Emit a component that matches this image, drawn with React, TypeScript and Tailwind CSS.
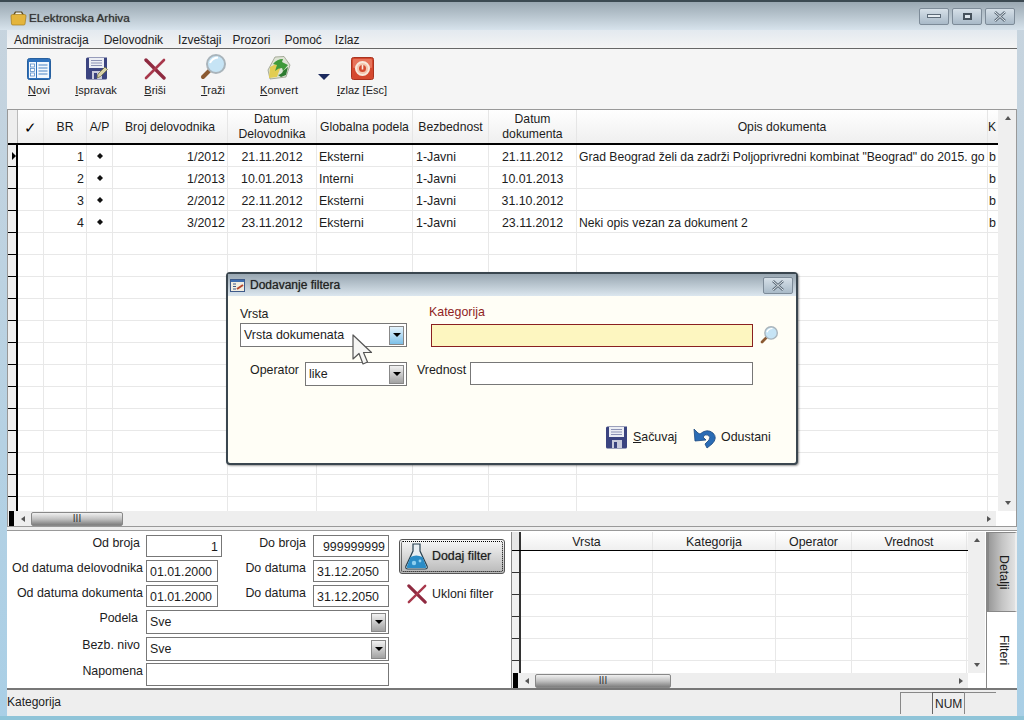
import type { ReactNode } from 'react';

const font = "font-['Liberation_Sans',Arial,sans-serif]";

interface Column {
  label: ReactNode;
  width: number;
  align: string;
}

const columns: Column[] = [
  { label: '✓', width: 26, align: 'justify-center' },
  { label: 'BR', width: 43, align: 'justify-center' },
  { label: 'A/P', width: 26, align: 'justify-center' },
  { label: 'Broj delovodnika', width: 115, align: 'justify-center' },
  { label: <>Datum<br />Delovodnika</>, width: 89, align: 'justify-center' },
  { label: 'Globalna podela', width: 96, align: 'justify-center' },
  { label: 'Bezbednost', width: 76, align: 'justify-center' },
  { label: <>Datum<br />dokumenta</>, width: 88, align: 'justify-center' },
  { label: 'Opis dokumenta', width: 411, align: 'justify-center' },
  { label: 'K', width: 11, align: 'justify-start' },
];

const rows = [
  ['', '1', '•', '1/2012', '21.11.2012', 'Eksterni', '1-Javni', '21.11.2012', 'Grad Beograd želi da zadrži Poljoprivredni kombinat "Beograd" do 2015. go', 'b'],
  ['', '2', '•', '1/2013', '10.01.2013', 'Interni', '1-Javni', '10.01.2013', '', 'b'],
  ['', '3', '•', '2/2012', '22.11.2012', 'Eksterni', '1-Javni', '31.10.2012', '', 'b'],
  ['', '4', '•', '3/2012', '23.11.2012', 'Eksterni', '1-Javni', '23.11.2012', 'Neki opis vezan za dokument 2', 'b'],
  ...Array.from({ length: 13 }, () => ['', '', '', '', '', '', '', '', '', '']),
];

const cellAlign = [
  'text-center text-[12.4px]',
  'text-right pr-[2px] text-[12.4px]',
  'text-center text-[12.4px]',
  'text-right pr-[2px] text-[12.4px]',
  'text-center text-[12.4px]',
  'text-left pl-[2px] text-[12.4px]',
  'text-left pl-[3px] text-[12.4px]',
  'text-center text-[12.4px]',
  'text-left pl-[2px] text-[12.15px]',
  'text-left pl-[1px] text-[12.4px]',
];

const filterColumns = [
  { label: 'Vrsta', width: 132 },
  { label: 'Kategorija', width: 123 },
  { label: 'Operator', width: 76 },
  { label: 'Vrednost', width: 115 },
];

function FolderIcon() {
  return (
    <svg width="17" height="16" viewBox="0 0 17 16">
      <path d="M3 5 L5 1.5 H12 L14 5 Z" fill="#5c4a22" />
      <path d="M4.5 5 L6 2.5 H11 L12.500 5 Z" fill="#f2f2e8" />
      <path d="M1 6 Q1 4.500 2.500 4.500 H14.500 Q16 4.500 16 6 L15 14 Q15 15 13.500 15 H3 Q1.500 15 1.500 14 Z" fill="#e4b53c" stroke="#a47c1c" strokeWidth="0.7" />
    </svg>
  );
}

function NoviIcon() {
  return (
    <svg width="24" height="22" viewBox="0 0 24 22">
      <rect x="0.500" y="0.500" width="23" height="21" rx="2" fill="#2f72bd" stroke="#27609f" />
      <rect x="2" y="4" width="20" height="16" fill="#f3f8fd" />
      <rect x="9" y="4" width="1" height="16" fill="#2f72bd" />
      <rect x="3.500" y="6" width="4" height="3" fill="#fff" stroke="#5b8fcb" strokeWidth="0.800" />
      <rect x="3.500" y="10.500" width="4" height="3" fill="#fff" stroke="#5b8fcb" strokeWidth="0.800" />
      <rect x="3.500" y="15" width="4" height="3" fill="#fff" stroke="#5b8fcb" strokeWidth="0.800" />
      <path d="M11.500 7h9M11.500 10h9M11.500 13h9M11.500 16h9" stroke="#4a84c6" strokeWidth="1.200" />
    </svg>
  );
}

function FloppyIcon({ pencil }: { pencil?: boolean }) {
  return (
    <svg width="23" height="23" viewBox="0 0 23 23">
      <path d="M1 2 Q1 0.500 2.500 0.500 H22 V21 Q22 22.500 20.500 22.500 H2.500 Q1 22.500 1 21 Z" fill="#3b4480" />
      <rect x="4" y="1" width="15" height="10" fill="#eceef4" />
      <path d="M6 3.500h11M6 6h11M6 8.500h11" stroke="#8d93b5" strokeWidth="1" />
      <rect x="7" y="14" width="10" height="8" fill="#c8cbdc" />
      <rect x="9" y="16" width="3" height="6" fill="#3b4480" />
      {pencil && <path d="M12 21 L13 17 L20 10 L22.500 12.500 L15.500 19.500 Z" fill="#d9d2a8" stroke="#6d7048" strokeWidth="0.800" />}
    </svg>
  );
}

function RedX({ size = 22 }: { size?: number }) {
  return (
    <svg width={size} height={size} viewBox="0 0 22 22">
      <path d="M2 2 L20 20" stroke="#8f2a40" strokeWidth="3.400" strokeLinecap="round" />
      <path d="M20 2 L2 20" stroke="#a8384c" strokeWidth="2.600" strokeLinecap="round" />
    </svg>
  );
}

function Magnifier({ size = 26 }: { size?: number }) {
  return (
    <svg width={size} height={size} viewBox="0 0 26 26">
      <path d="M11 15 L3 23" stroke="#8b5a32" strokeWidth="4" strokeLinecap="round" />
      <circle cx="16" cy="10" r="9" fill="#c6e4f5" stroke="#a9b4bb" strokeWidth="2" />
      <path d="M10 9 Q12 4 18 3.500" stroke="#ffffff" strokeWidth="2" fill="none" />
    </svg>
  );
}

function KonvertIcon() {
  return (
    <svg width="24" height="24" viewBox="0 0 24 24">
      <path d="M8 1 L17 0.500 L23 9 L19 21 L3 23 L1 14 Z" fill="#dfe4d6" stroke="#8a8f7a" strokeWidth="0.700" />
      <path d="M2 22 L3 11 L9 8 L14 10 L10 21 Z" fill="#e2cd52" />
      <path d="M6 8 Q10 3 16 3 L15 6 L21 9 L16 15 L15 12 Q11 12 8 15 L10 9 Z" fill="#3f9a3a" />
      <path d="M11 19 Q15 18 16 15 L21 11 L19 19 L14 21 Z" fill="#2d7a30" />
    </svg>
  );
}

function PowerIcon() {
  return (
    <svg width="23" height="23" viewBox="0 0 23 23">
      <rect x="0.500" y="0.500" width="22" height="22" rx="2" fill="#d5492f" stroke="#a9331f" />
      <rect x="2" y="2" width="19" height="9" rx="1" fill="#e6735a" />
      <circle cx="11.500" cy="11.500" r="6.500" fill="#f3c4ad" stroke="#f8e9dc" strokeWidth="2" />
      <circle cx="11.500" cy="11.500" r="3.500" fill="#d5492f" />
      <path d="M11.500 8 V12.500" stroke="#f8e9dc" strokeWidth="1.600" />
    </svg>
  );
}

function FlaskIcon() {
  return (
    <svg width="23" height="27" viewBox="0 0 23 27">
      <path d="M8 1 H15 V8 L22 23 Q23 26 20 26 H3 Q0 26 1 23 L8 8 Z" fill="#e8eef2" stroke="#27404f" strokeWidth="1.200" />
      <path d="M5.500 14 Q11 11 17.500 14 L21 23 Q22 25 19.500 25 H3.500 Q1 25 2 23 Z" fill="#2b8cc6" />
      <circle cx="9" cy="20" r="2.200" fill="#8fd0ef" />
      <circle cx="15" cy="18" r="1.400" fill="#8fd0ef" />
    </svg>
  );
}

function UndoIcon() {
  return (
    <svg width="24" height="22" viewBox="0 0 24 22">
      <path d="M7 7 Q14 1 20 6 Q25 11 19 17 L14 21 L12 17 L16 13 Q18 10 15 8 Q12 7 10 10 L13 13 L2 14 L1 2 L5 6 Z" fill="#2a6cb5" stroke="#1b477f" strokeWidth="0.800" />
    </svg>
  );
}

function DialogIcon() {
  return (
    <svg width="15" height="13" viewBox="0 0 15 13">
      <rect x="0.500" y="0.500" width="14" height="12" fill="#f2ede0" stroke="#3f5b8a" />
      <rect x="1" y="1" width="13" height="2" fill="#3f6db0" />
      <path d="M3 5h3M3 7.500h3M3 10h3" stroke="#3f5b8a" />
      <path d="M7 10 L13 6" stroke="#b4462d" strokeWidth="2" />
    </svg>
  );
}

function WindowButton({ children }: { children: ReactNode }) {
  return (
    <div className="flex items-center justify-center w-[30px] h-[17px] rounded-[2px] border border-[#7d8b98] bg-gradient-to-b from-[#d6e0e8] to-[#a9bac8]">
      {children}
    </div>
  );
}

function CloseGlyph() {
  return (
    <svg width="14" height="11" viewBox="0 0 14 11">
      <path d="M2 1 L12 10 M12 1 L2 10" stroke="#5d6b78" strokeWidth="2.600" />
      <path d="M2 1 L12 10 M12 1 L2 10" stroke="#e6edf2" strokeWidth="1" />
    </svg>
  );
}

function Arrow({ dir, className = '' }: { dir: 'up' | 'down' | 'left' | 'right'; className?: string }) {
  const shape = {
    up: 'border-x-[3px] border-x-transparent border-b-[4px] border-b-[#555]',
    down: 'border-x-[3px] border-x-transparent border-t-[4px] border-t-[#555]',
    left: 'border-y-[3px] border-y-transparent border-r-[4px] border-r-[#555]',
    right: 'border-y-[3px] border-y-transparent border-l-[4px] border-l-[#555]',
  }[dir];
  return <div className={`w-0 h-0 ${shape} ${className}`} />;
}

function ComboButton({ active }: { active?: boolean }) {
  return (
    <div className={`flex items-center justify-center w-[15px] h-[19px] border border-[#888] bg-gradient-to-b ${active ? 'from-[#e4f3fc] to-[#7cc0e8]' : 'from-[#f2f2f2] to-[#a2a2a2]'}`}>
      <div className="w-0 h-0 border-x-[4px] border-x-transparent border-t-[4px] border-t-black" />
    </div>
  );
}

function Combo({ text, active, className }: { text: string; active?: boolean; className: string }) {
  return (
    <div className={`flex items-center justify-between border border-[#777] bg-white pl-[3px] pr-[2px] text-[12.4px] text-[#1c1c1c] ${className}`}>
      <span>{text}</span>
      <ComboButton active={active} />
    </div>
  );
}

function TextBox({ text = '', className }: { text?: string; className: string }) {
  return (
    <div className={`flex items-center border border-[#777] bg-white px-[3px] pt-[2px] text-[12.4px] text-[#1c1c1c] ${className}`}>
      {text}
    </div>
  );
}

function ToolButton({ icon, label, hotkey, className }: { icon: ReactNode; label: string; hotkey: number; className: string }) {
  return (
    <div className={`flex flex-col items-center w-[50px] ${className}`}>
      <div className="flex items-end justify-center h-[24px]">{icon}</div>
      <div className="mt-[4px] text-[11px] leading-[13px] whitespace-nowrap text-[#222]">
        {label.slice(0, hotkey)}
        <span className="underline">{label[hotkey]}</span>
        {label.slice(hotkey + 1)}
      </div>
    </div>
  );
}

function Diamond() {
  return (
    <svg className="inline-block mb-[3px]" width="6" height="6" viewBox="0 0 6 6">
      <path d="M3 0 L6 3 L3 6 L0 3 Z" fill="#111" />
    </svg>
  );
}

function HScroll({ thumb, width }: { thumb: number; width: number }) {
  return (
    <div className="flex items-center h-[15px] shrink-0 bg-[#eeeeee]" style={{ width }}>
      <div className="w-[5px] h-[15px] ml-px bg-black shrink-0" />
      <Arrow dir="left" className="ml-[7px] shrink-0" />
      <div
        style={{ width: thumb }}
        className="flex items-center justify-center ml-[6px] h-[14px] shrink-0 rounded-[2px] border border-[#888] bg-gradient-to-b from-[#f0f0f0] via-[#c2c2c2] to-[#7e7e7e] text-[10px] leading-none text-[#333]"
      >
        III
      </div>
      <div className="flex-1" />
      <Arrow dir="right" className="mr-[5px] shrink-0" />
    </div>
  );
}

function DocumentGrid() {
  return (
    <div className="relative h-[418px] bg-white border border-[#999] flex flex-col overflow-hidden">
      <div className="flex flex-1 min-h-0">
        <div className="w-[990px] shrink-0 overflow-hidden flex flex-col">
          <div className="flex h-[35px] shrink-0 border-b-2 border-black bg-gradient-to-b from-white to-[#efefef]">
            <div className="w-[10px] shrink-0 border-r border-[#bbb] bg-[#eeeeee]" />
            {columns.map((col, i) => (
              <div
                key={i}
                style={{ width: col.width }}
                className={`flex items-center shrink-0 pt-px border-r border-[#e6e6e6] text-center text-[12.2px] leading-[15px] text-[#1c1c1c] whitespace-nowrap overflow-hidden ${col.align}`}
              >
                <span className={i === 0 ? 'text-[15px] text-black' : ''}>{col.label}</span>
              </div>
            ))}
          </div>
          {rows.map((row, r) => (
            <div key={r} className="flex h-[22px] shrink-0 border-b border-[#e8e8e8]">
              <div className="flex items-center w-[10px] shrink-0 border-r-2 border-black bg-[#f0f0f0] border-b border-b-black -mb-px">
                {r === 0 && <div className="ml-[4px] w-0 h-0 border-y-[4px] border-y-transparent border-l-[4px] border-l-black" />}
              </div>
              {row.map((cell, c) => (
                <div
                  key={c}
                  style={{ width: columns[c].width }}
                  className={`shrink-0 border-r border-[#e8e8e8] leading-[24px] whitespace-nowrap overflow-hidden text-[#1c1c1c] ${cellAlign[c]}`}
                >
                  {c === 2 && cell ? <Diamond /> : cell}
                </div>
              ))}
            </div>
          ))}
        </div>
        <div className="flex flex-col items-center justify-between w-[19px] shrink-0 bg-[#efefef] py-[6px]">
          <Arrow dir="up" />
          <Arrow dir="down" />
        </div>
      </div>
      <HScroll thumb={92} width={988} />
    </div>
  );
}

function FormRow({ className, children }: { className: string; children: ReactNode }) {
  return <div className={`flex shrink-0 ${className}`}>{children}</div>;
}

function FormLabel({ text, width }: { text: string; width: string }) {
  return <div className={`shrink-0 text-right text-[12.4px] leading-[16px] text-[#1c1c1c] whitespace-nowrap ${width}`}>{text}</div>;
}

function FilterForm() {
  return (
    <div className="flex flex-col gap-[3px] pt-[4px] w-[382px] shrink-0">
      <FormRow className="h-[22px]">
        <FormLabel text="Od broja" width="w-[133px]" />
        <TextBox text="1" className="ml-[6px] w-[76px] h-[22px] justify-end" />
        <FormLabel text="Do broja" width="w-[84px]" />
        <TextBox text="999999999" className="ml-[7px] w-[76px] h-[22px] justify-end" />
      </FormRow>
      <FormRow className="h-[22px]">
        <FormLabel text="Od datuma delovodnika" width="w-[136px]" />
        <TextBox text="01.01.2000" className="ml-[3px] w-[72px] h-[22px]" />
        <FormLabel text="Do datuma" width="w-[88px]" />
        <TextBox text="31.12.2050" className="ml-[7px] w-[76px] h-[22px]" />
      </FormRow>
      <FormRow className="h-[22px]">
        <FormLabel text="Od datuma dokumenta" width="w-[136px]" />
        <TextBox text="01.01.2000" className="ml-[3px] w-[72px] h-[22px]" />
        <FormLabel text="Do datuma" width="w-[88px]" />
        <TextBox text="31.12.2050" className="ml-[7px] w-[76px] h-[22px]" />
      </FormRow>
      <FormRow className="h-[24px]">
        <FormLabel text="Podela" width="w-[131px]" />
        <Combo text="Sve" className="ml-[8px] w-[243px] h-[24px]" />
      </FormRow>
      <FormRow className="h-[24px]">
        <FormLabel text="Bezb. nivo" width="w-[133px]" />
        <Combo text="Sve" className="ml-[6px] w-[243px] h-[24px]" />
      </FormRow>
      <FormRow className="h-[23px] -mt-px">
        <FormLabel text="Napomena" width="w-[136px]" />
        <TextBox className="ml-[3px] w-[243px] h-[23px]" />
      </FormRow>
    </div>
  );
}

function FilterActions() {
  return (
    <div className="flex flex-col ml-[10px] pt-[8px] shrink-0">
      <div className="flex items-center w-[106px] h-[35px] rounded-[3px] border border-[#555] bg-gradient-to-b from-[#f7f7f7] to-[#b9b9b9] p-px">
        <div className="flex items-center gap-[4px] w-full h-full pl-[3px] border border-dotted border-black rounded-[2px] text-[12.4px] text-[#1c1c1c]">
          <FlaskIcon />
          <span className="[text-shadow:0_0_1px_#777]">Dodaj filter</span>
        </div>
      </div>
      <div className="flex items-center gap-[5px] ml-[8px] mt-[10px] text-[12.4px] text-[#1c1c1c]">
        <RedX size={20} />
        <span>Ukloni filter</span>
      </div>
    </div>
  );
}

function FilterGrid() {
  return (
    <div className="flex flex-col w-[474px] shrink-0 mt-px border-l border-[#888]">
      <div className="flex flex-1 min-h-0">
        <div className="flex flex-col w-[456px] shrink-0 overflow-hidden">
          <div className="flex h-[19px] shrink-0 border-b border-black bg-gradient-to-b from-white to-[#efefef]">
            <div className="w-[9px] shrink-0 border-r-2 border-[#333] bg-[#e6e6e6]" />
            {filterColumns.map((col) => (
              <div key={col.label} style={{ width: col.width }} className="shrink-0 border-r border-[#e6e6e6] text-center text-[12.4px] leading-[20px] text-[#1c1c1c]">
                {col.label}
              </div>
            ))}
          </div>
          {Array.from({ length: 6 }).map((_, r) => (
            <div key={r} className="flex h-[22px] shrink-0 border-b border-[#e8e8e8]">
              <div className="w-[9px] shrink-0 border-r-2 border-b border-[#333] bg-[#f0f0f0] -mb-px" />
              {filterColumns.map((col) => (
                <div key={col.label} style={{ width: col.width }} className="shrink-0 border-r border-[#e8e8e8]" />
              ))}
            </div>
          ))}
        </div>
        <div className="flex flex-col items-center justify-between w-[17px] shrink-0 bg-[#efefef] py-[6px]">
          <Arrow dir="up" />
          <Arrow dir="down" />
        </div>
      </div>
      <HScroll thumb={136} width={456} />
    </div>
  );
}

function VerticalTabs() {
  return (
    <div className="flex flex-col w-[31px] shrink-0 ml-px mt-px">
      <div className="flex items-center justify-center h-[80px] pl-[3px] border border-[#888] bg-gradient-to-r from-[#9a9a9a] via-[#c4c4c4] to-[#e2e2e2] border-l-[3px] border-r-[2px] border-r-[#eee]">
        <span className="[writing-mode:vertical-rl] text-[12.4px] leading-none text-[#1c1c1c]">Detalji</span>
      </div>
      <div className="flex items-center justify-center flex-1 pl-[3px] bg-white border-l border-[#888]">
        <span className="[writing-mode:vertical-rl] text-[12.4px] leading-none text-[#1c1c1c]">Filteri</span>
      </div>
    </div>
  );
}

function FilterDialog() {
  return (
    <div className="absolute left-[226px] top-[272px] w-[572px] h-[193px] flex flex-col rounded-[4px] border-2 border-[#3a464f] bg-[#fffef6] text-[#1c1c1c] shadow-[1px_1px_2px_rgba(0,0,0,0.4)]">
      <div className="flex items-center h-[22px] shrink-0 pl-[2px] pr-[3px] bg-gradient-to-b from-[#98a6b1] to-[#dce7ef] text-[12px]">
        <DialogIcon />
        <span className="ml-[5px] text-[#222] [text-shadow:0_0_1px_#555]">Dodavanje filtera</span>
        <div className="flex-1" />
        <WindowButton><CloseGlyph /></WindowButton>
      </div>
      <div className="flex flex-col flex-1 pl-[12px] pt-[9px]">
        <div className="flex h-[44px]">
          <div className="flex flex-col w-[167px] mt-[3px]">
            <div className="text-[12.4px] leading-[12px] mb-[3px]">Vrsta</div>
            <Combo text="Vrsta dokumenata" active className="w-[167px] h-[24px]" />
          </div>
          <div className="flex flex-col ml-[21px]">
            <div className="text-[12.4px] leading-[14px] ml-[1px] mb-[5px] text-[#8f1f1f]">Kategorija</div>
            <div className="flex items-center">
              <div className="ml-[3px] w-[322px] h-[23px] border border-[#8a2020] bg-[#fdf6c0]" />
              <div className="ml-[7px] mb-[2px]"><Magnifier size={18} /></div>
            </div>
          </div>
        </div>
        <div className="flex mt-[13px] h-[24px]">
          <div className="w-[65px] pl-[10px] text-[12.4px] leading-[15px] mt-px">Operator</div>
          <Combo text="like" className="w-[102px] h-[24px]" />
          <div className="w-[60px] pl-[10px] text-[12.4px] leading-[15px] mt-px">Vrednost</div>
          <div className="ml-[3px] w-[283px] h-[23px] border border-[#777] bg-white" />
        </div>
        <div className="flex items-center mt-[40px] ml-[365px] text-[12.4px]">
          <FloppyIcon />
          <span className="ml-[5px]"><span className="underline">S</span>ačuvaj</span>
          <div className="ml-[16px]"><UndoIcon /></div>
          <span className="ml-[4px]">Odustani</span>
        </div>
      </div>
    </div>
  );
}

function MouseCursor() {
  return (
    <svg className="absolute left-[351px] top-[333px]" width="24" height="34" viewBox="0 0 24 34">
      <path d="M2 2 V26 L8 20.500 L12 31 L16.500 29 L12.500 19.500 L20.500 19.500 Z" fill="#f6f6f4" stroke="#555" strokeWidth="1.200" strokeLinejoin="round" />
    </svg>
  );
}

export default function App() {
  return (
    <div className={`relative w-[1024px] h-[720px] flex flex-col overflow-hidden bg-gradient-to-b from-[#c8d4de] to-[#a9cfe6] ${font}`}>
      <div className="flex items-center h-[30px] shrink-0 pl-[10px] pr-[9px] pt-[4px] border-t-2 border-[#3c4a52] bg-gradient-to-b from-[#9aa8b2] to-[#d7e3ec]">
        <FolderIcon />
        <span className="ml-[2px] text-[11.7px] text-[#333] [text-shadow:0_0_1px_#555]">ELektronska Arhiva</span>
        <div className="flex-1" />
        <div className="flex gap-[3px] mb-[4px]">
          <WindowButton><div className="w-[14px] h-[4px] border border-[#5d6b78] bg-[#e6edf2]" /></WindowButton>
          <WindowButton><div className="w-[9px] h-[7px] border-2 border-[#46525c] bg-[#dfe7ed]" /></WindowButton>
          <WindowButton><CloseGlyph /></WindowButton>
        </div>
      </div>

      <div className="flex flex-col flex-1 min-h-0 mx-[7px]">
        <div className="flex items-center h-[19px] shrink-0 pl-[7px] pt-[2px] border-b border-[#666] bg-gradient-to-b from-[#e3e9ef] to-[#f4f4f4] text-[12px] text-[#222]">
          <span>Administracija</span>
          <span className="ml-[15px]">Delovodnik</span>
          <span className="ml-[15px]">Izveštaji</span>
          <span className="ml-[11px]">Prozori</span>
          <span className="ml-[14px]">Pomoć</span>
          <span className="ml-[13px]">Izlaz</span>
        </div>

        <div className="flex h-[60px] shrink-0 pt-[7px] bg-[#f5f5f5]">
          <ToolButton className="ml-[7px]" icon={<NoviIcon />} label="Novi" hotkey={0} />
          <ToolButton className="ml-[7px]" icon={<FloppyIcon pencil />} label="Ispravak" hotkey={0} />
          <ToolButton className="ml-[9px]" icon={<RedX />} label="Briši" hotkey={0} />
          <ToolButton className="ml-[8px]" icon={<Magnifier />} label="Traži" hotkey={0} />
          <ToolButton className="ml-[16px]" icon={<KonvertIcon />} label="Konvert" hotkey={0} />
          <div className="ml-[14px] mt-[18px] w-0 h-0 border-x-[6px] border-x-transparent border-t-[6px] border-t-[#1c2a5e]" />
          <ToolButton className="ml-[7px]" icon={<PowerIcon />} label="Izlaz [Esc]" hotkey={0} />
        </div>

        <DocumentGrid />

        <div className="h-[4px] shrink-0 bg-[#eeeeee] border-b border-[#999]" />

        <div className="flex h-[159px] shrink-0 bg-white border-b-2 border-[#777]">
          <FilterForm />
          <FilterActions />
          <div className="ml-[6px]"></div>
          <FilterGrid />
          <VerticalTabs />
        </div>

        <div className="flex items-center h-[26px] shrink-0 pb-[3px] bg-[#eeeeee] text-[12px] text-[#222]">
          <span className="flex-1">Kategorija</span>
          <div className="flex h-[22px] self-end mb-[-1px]">
            <div className="w-[32px] border-l border-t border-[#888]" />
            <div className="flex items-center w-[32px] border-l border-t border-[#666] pl-[2px]">NUM</div>
            <div className="w-[32px] border-l border-t border-[#888]" />
            <div className="w-[21px]" />
          </div>
        </div>
      </div>

      <div className="h-[4px] shrink-0 bg-[#8fc4d8]" />

      <FilterDialog />
      <MouseCursor />
    </div>
  );
}
